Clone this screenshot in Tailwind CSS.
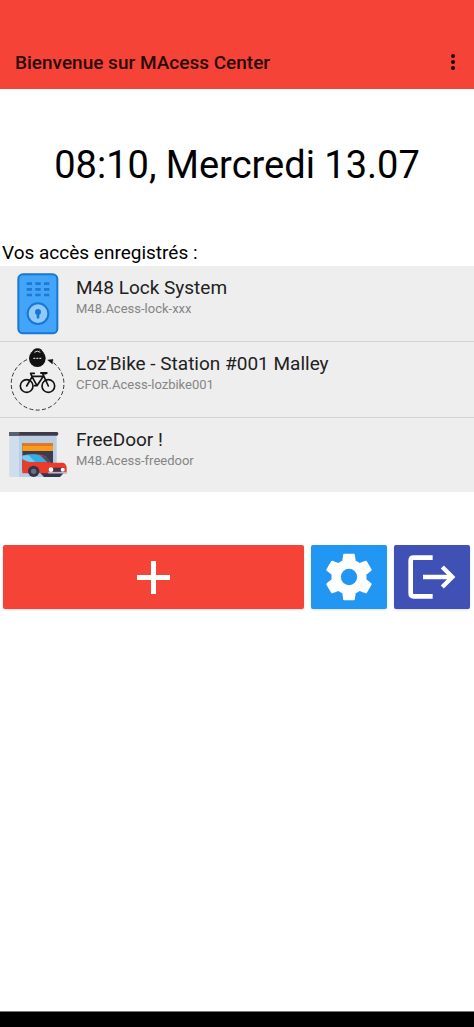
<!DOCTYPE html>
<html lang="fr">
<head>
<meta charset="utf-8">
<meta name="viewport" content="width=device-width, initial-scale=1">
<title>MAcess Center</title>
<script src="https://cdn.jsdelivr.net/npm/@tailwindcss/browser@4"></script>
</head>
<body class="flex min-h-screen flex-col bg-white font-[Roboto,sans-serif] text-black">
  <header class="flex items-center justify-between bg-[#f54337] pt-[43px] pr-3 pb-1.5 pl-[15px]">
    <h1 class="text-[19px] leading-10 font-medium text-[#2a0a08]">Bienvenue sur MAcess Center</h1>
    <button type="button" aria-label="Plus d'options" class="flex h-10 w-[18px] items-center justify-center">
      <svg class="h-5 w-2" viewBox="0 0 8 20" fill="#1c0504"><circle cx="4" cy="3" r="2"/><circle cx="4" cy="9" r="2"/><circle cx="4" cy="15" r="2"/></svg>
    </button>
  </header>
  <main class="grow">
    <p class="pt-[52px] text-center text-[38px] leading-[48px]">08:10, Mercredi 13.07</p>
    <h2 class="mt-[51px] pl-0.5 text-[19px] leading-[26px]">Vos accès enregistrés :</h2>
    <ul class="divide-y divide-[#d4d4d4] bg-[#eeeeee]">
      <li>
        <a href="#lock" class="flex h-[75px] gap-1">
          <svg class="h-[74px] w-[72px] shrink-0" viewBox="0 6 216 222" fill="none">
            <rect x="55" y="31" width="117" height="177" rx="14" fill="#42a5fa" stroke="#1976d2" stroke-width="6"/>
            <path d="M80 59h16M106 59h16M132 59h16M80 76h16M106 76h16M132 76h16M80 93h16M106 93h16M132 93h16" stroke="#1f78d1" stroke-width="8"/>
            <circle cx="114" cy="149" r="31" fill="#90caf9" stroke="#1976d2" stroke-width="6"/>
            <circle cx="114" cy="144" r="9" fill="#1976d2"/>
            <path d="M114 146v14" stroke="#1976d2" stroke-width="8" stroke-linecap="round"/>
          </svg>
          <div class="pt-[9px]">
            <h3 class="text-[19px] leading-[26px] text-[#212121]">M48 Lock System</h3>
            <p class="text-[13px] leading-4 text-[#858585]">M48.Acess-lock-xxx</p>
          </div>
        </a>
      </li>
      <li>
        <a href="#bike" class="flex h-[75px] gap-1">
          <svg class="h-[74px] w-[72px] shrink-0" viewBox="0 0 216 222" fill="none" stroke="#111">
            <path d="M81 53A79 79 0 1 0 160 62" stroke="#333" stroke-width="3" stroke-dasharray="12 7"/>
            <path d="M143 54l16-2-2 14z" fill="#111"/>
            <path d="M98 34C98 17 127 17 127 34" stroke-width="5"/>
            <ellipse cx="112" cy="49" rx="25" ry="26" fill="#111" stroke="none"/>
            <path d="M103 31q9-7 18 0" stroke="#ddd" stroke-width="3"/>
            <path d="M100 49h6M109 49h6M118 49h6" stroke="#ccc" stroke-width="4"/>
            <g stroke-width="5" stroke-linejoin="round" stroke-linecap="round">
              <circle cx="80" cy="132" r="19"/><circle cx="145" cy="132" r="19"/>
              <path d="M80 132L97 103H130L111 131L96 104L92 94H103M145 132L128 95H137M111 131h-7"/>
              <path d="M123 93h17" stroke-width="6"/>
            </g>
          </svg>
          <div class="pt-[9px]">
            <h3 class="text-[19px] leading-[26px] text-[#212121]">Loz'Bike - Station #001 Malley</h3>
            <p class="text-[13px] leading-4 text-[#858585]">CFOR.Acess-lozbike001</p>
          </div>
        </a>
      </li>
      <li>
        <a href="#door" class="flex h-[74px] gap-1">
          <svg class="h-[74px] w-[72px] shrink-0" viewBox="0 0 216 222" fill="none">
            <path d="M29 52h141v125H29z" fill="#b7cee3"/>
            <path d="M29 52h28v125H29z" fill="#cfddec"/>
            <path d="M67 75h92v83H67z" fill="#3d3b50"/>
            <path d="M67 75h92v7H67z" fill="#ef7325"/><path d="M67 82h92v17H67z" fill="#f99b1c"/>
            <path d="M27 42h144q4 0 4 5.500T171 53H27z" fill="#40394a"/>
            <path d="M27 42h31v11H27z" fill="#59606d"/>
            <path d="M120 164h72l-12 13h-48z" fill="#33364a"/>
            <path d="M67 112q48-8 69 2l17 20h34q11 0 13 14v18H67z" fill="#ea3b2b"/>
            <path d="M67 112q38-6 52 0l23 20H92q-10 0-25-9z" fill="#2eafe8"/>
            <path d="M67 114l18-3 21 21H92q-10 0-25-9z" fill="#72ccf5"/>
            <path d="M123 112q18 3 31 21h-12z" fill="#3c526f"/>
            <path d="M151 149h40v14h-34z" fill="#4b3140"/>
            <circle cx="153" cy="155" r="7" fill="#fff"/><circle cx="188" cy="155" r="6" fill="#fff"/>
            <path d="M145 164h56" stroke="#b4bcd3" stroke-width="5"/>
            <circle cx="101" cy="160" r="17" fill="#33364a"/><circle cx="101" cy="160" r="8" fill="#687087"/>
          </svg>
          <div class="pt-[9px]">
            <h3 class="text-[19px] leading-[26px] text-[#212121]">FreeDoor !</h3>
            <p class="text-[13px] leading-4 text-[#858585]">M48.Acess-freedoor</p>
          </div>
        </a>
      </li>
    </ul>
    <div class="mt-[53px] flex gap-[7px] pr-1 pl-[3px]">
      <button type="button" aria-label="Ajouter un accès" class="flex h-16 grow items-center justify-center rounded-xs bg-[#f54337] shadow-sm">
        <svg class="size-[33px]" viewBox="0 0 33 33"><path d="M16.500 0v33M0 16.500h33" stroke="#fff" stroke-width="5"/></svg>
      </button>
      <button type="button" aria-label="Paramètres" class="flex h-16 w-[76px] items-center justify-center rounded-xs bg-[#2196f3] shadow-sm">
        <svg class="size-14" viewBox="0 0 24 24" fill="#fff"><path d="M19.430 12.980c.04-.32.070-.64.070-.98s-.03-.66-.07-.98l2.110-1.650c.19-.15.240-.42.120-.64l-2-3.460c-.12-.22-.39-.3-.61-.22l-2.490 1c-.52-.4-1.080-.73-1.690-.98l-.38-2.650C14.460 2.180 14.250 2 14 2h-4c-.25 0-.46.180-.49.420l-.38 2.650c-.61.250-1.170.590-1.690.980l-2.490-1c-.23-.09-.49 0-.61.220l-2 3.460c-.13.220-.07.490.12.640l2.110 1.650c-.04.320-.07.650-.07.980s.03.660.07.980l-2.110 1.650c-.19.150-.24.420-.12.640l2 3.460c.12.220.390.300.610.220l2.490-1c.52.400 1.080.730 1.690.980l.38 2.650c.03.240.240.420.490.420h4c.25 0 .46-.18.490-.42l.38-2.650c.61-.25 1.170-.59 1.690-.98l2.490 1c.23.090.490 0 .61-.22l2-3.460c.12-.22.070-.49-.12-.64zM12 15.500a3.500 3.500 0 1 1 0-7 3.500 3.500 0 0 1 0 7z"/></svg>
      </button>
      <button type="button" aria-label="Se déconnecter" class="flex h-16 w-[76px] items-center justify-center rounded-xs bg-[#3f51b5] shadow-sm">
        <svg class="h-11 w-12" viewBox="-1 -1 144 132" fill="none" stroke="#fff" stroke-width="14"><path d="M73 7H16Q7 7 7 16V114Q7 123 16 123H73M44 65H132"/><path d="M102 35l30 30-30 30" stroke-width="13"/></svg>
      </button>
    </div>
  </main>
  <footer class="h-4 border-t border-[#777] bg-black"></footer>
</body>
</html>
